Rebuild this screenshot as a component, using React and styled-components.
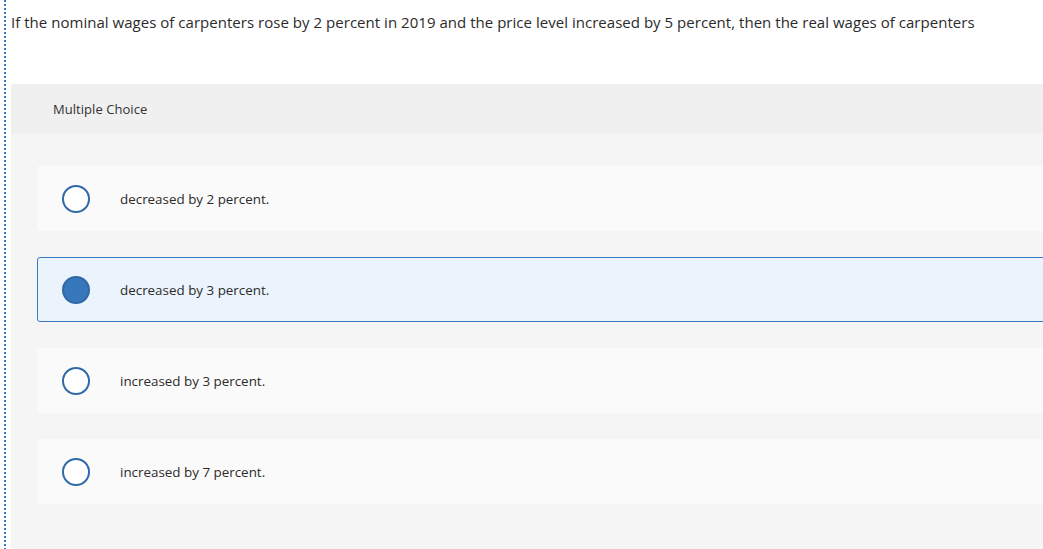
import React from "react";
import styled, { createGlobalStyle } from "styled-components";

const Global = createGlobalStyle`
  html, body { margin: 0; padding: 0; background: #fff; overflow: hidden; }
  body { font-family: "Open Sans", Lato, Arial, sans-serif; color: #333; }
`;

const Frame = styled.div`
  margin-left: 4px;
  border-left: 2px dotted #3a78c2;
  min-height: 549px;
  padding-left: 5px;
  box-sizing: border-box;
  overflow: hidden;
`;

const Question = styled.p`
  margin: 0;
  padding: 12px 0 0 0;
  height: 84px;
  box-sizing: border-box;
  font-size: 15px;
  letter-spacing: 0.03px;
  line-height: 20px;
  color: #2b2b2b;
  white-space: nowrap;
`;

const Panel = styled.section`
  width: 1100px;
  background: #f5f5f5;
  border-radius: 3px 0 0 0;
  min-height: 470px;
`;

const PanelHeader = styled.div`
  height: 50px;
  background: #f0f0f0;
  display: flex;
  align-items: center;
  padding-left: 42px;
  font-size: 13px;
  letter-spacing: 0.05px;
  color: #333;
  border-radius: 3px 0 0 0;
`;

const List = styled.div`
  display: flex;
  flex-direction: column;
  gap: 26px;
  padding: 32px 0 0 26px;
`;

const Option = styled.label`
  display: flex;
  align-items: center;
  height: 65px;
  box-sizing: border-box;
  border-radius: 3px;
  background: ${p => (p.$selected ? "#ebf3fc" : "#fafafa")};
  border: 1px solid ${p => (p.$selected ? "#3a78c2" : "transparent")};
  padding-left: 24px;
  cursor: pointer;
`;

const Radio = styled.span`
  width: 28px;
  height: 28px;
  box-sizing: border-box;
  border-radius: 50%;
  border: 2px solid #2f69a8;
  background: ${p => (p.$selected ? "#3777bc" : "#fff")};
  flex: none;
`;

const OptionText = styled.span`
  margin-left: 30px;
  font-size: 13.4px;
  color: #2b2b2b;
`;

const options = [
  "decreased by 2 percent.",
  "decreased by 3 percent.",
  "increased by 3 percent.",
  "increased by 7 percent.",
];

export default function App() {
  const selected = 1;
  return (
    <>
      <Global />
      <Frame>
        <Question>
          If the nominal wages of carpenters rose by 2 percent in 2019 and the price level increased by 5 percent, then the real wages of carpenters
        </Question>
        <Panel>
          <PanelHeader>Multiple Choice</PanelHeader>
          <List>
            {options.map((o, i) => (
              <Option key={o} $selected={i === selected}>
                <Radio $selected={i === selected} />
                <OptionText>{o}</OptionText>
              </Option>
            ))}
          </List>
        </Panel>
      </Frame>
    </>
  );
}
